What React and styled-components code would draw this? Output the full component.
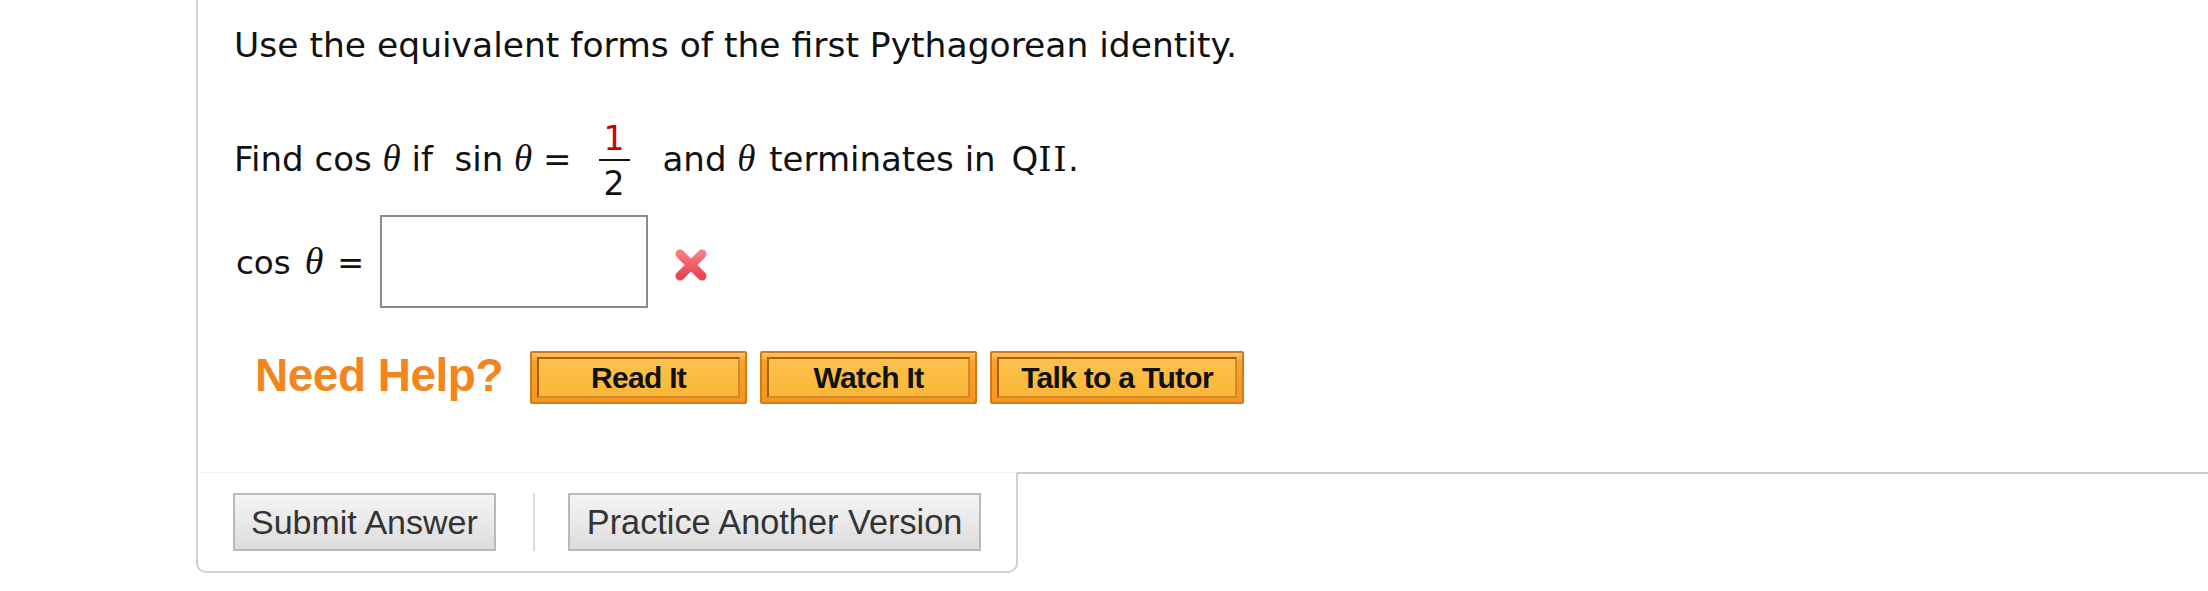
import React from "react";
import styled, { createGlobalStyle } from "styled-components";

const Global = createGlobalStyle`
  html, body { margin: 0; padding: 0; background: #fff; }
  body { font-family: "DejaVu Sans", Verdana, sans-serif; color: #111; }
  * { box-sizing: border-box; }
`;

const Page = styled.div`
  width: 2208px;
  height: 591px;
  overflow: hidden;
  background: #fff;
`;

const Card = styled.div`
  margin-left: 196px;
  display: flex;
  flex-direction: column;
`;

const Body = styled.div`
  height: 472px;
  border-left: 2px solid #d3d3d3;
  padding: 25px 0 0 36px;
`;

const Title = styled.div`
  font-size: 34.5px;
  line-height: 40px;
  white-space: nowrap;
`;

const Question = styled.div`
  margin-top: 58px;
  font-size: 34px;
  line-height: 40px;
  white-space: nowrap;
`;

const Theta = styled.span`
  font-family: "Liberation Serif", "Times New Roman", serif;
  font-style: italic;
  font-size: ${(p) => p.$size || 37}px;
  margin-right: ${(p) => p.$after || 0}px;
`;

const Quadrant = styled.span`
  margin-left: 5px;
`;

const Roman = styled.span`
  font-family: "DejaVu Serif", "Liberation Serif", serif;
  font-size: 34px;
  letter-spacing: 1.5px;
`;

const Fraction = styled.span`
  display: inline-flex;
  flex-direction: column;
  align-items: stretch;
  vertical-align: middle;
  margin: 0 33px 0 27px;
  font-size: 33px;
  line-height: 32px;
  text-align: center;
`;

const Numerator = styled.span`
  color: #d40000;
  padding: 0 5px 4px;
  border-bottom: 2px solid #111;
`;

const Denominator = styled.span`
  padding: 7px 5px 0;
`;

const AnswerRow = styled.div`
  margin-top: 15px;
  display: flex;
  align-items: center;
`;

const MathLabel = styled.div`
  display: flex;
  align-items: baseline;
  gap: 14px;
  font-size: 32.5px;
  line-height: 40px;
  margin-left: 2px;
  margin-right: 16px;
`;

const Equals = styled.span`
  font-size: 32px;
`;

const AnswerInput = styled.input`
  width: 268px;
  height: 93px;
  border: 2px solid #8a8a8a;
  background: #fff;
  outline: none;
  padding: 0 8px;
  font-size: 30px;
`;

const WrongMark = styled.svg`
  margin-left: 25px;
  width: 36px;
  height: 36px;
  margin-top: 6px;
`;

const HelpRow = styled.div`
  margin-top: 43px;
  margin-left: 21px;
  display: flex;
  align-items: center;
  gap: 13px;
`;

const HelpLabel = styled.span`
  font-family: "Liberation Sans", Arial, sans-serif;
  font-weight: bold;
  font-size: 46px;
  line-height: 46px;
  color: #f2861c;
  margin-right: 14px;
  margin-bottom: 6px;
  letter-spacing: -0.5px;
`;

const HelpButton = styled.button`
  width: ${(p) => p.$w}px;
  height: 53px;
  padding: 4px 5px;
  border: 2px solid #d27a18;
  border-radius: 2px;
  background: linear-gradient(#fbc66b 0%, #f7a12c 18%, #f59622 100%);
  cursor: pointer;
  display: flex;
`;

const HelpInner = styled.span`
  flex: 1;
  display: flex;
  align-items: center;
  justify-content: center;
  border: 2px solid #a9600f;
  border-right-color: #d08a2c;
  border-bottom-color: #d08a2c;
  background: linear-gradient(#fcc24e, #fbb636);
  font-family: "Liberation Sans", Arial, sans-serif;
  font-weight: bold;
  font-size: 30px;
  letter-spacing: -0.7px;
  color: #111;
`;

const Footer = styled.div`
  display: flex;
  align-items: flex-start;
`;

const Tab = styled.div`
  display: flex;
  align-items: stretch;
  padding: 20px 35px 20px 35px;
  border: 2px solid #cfcfcf;
  border-top: 1px solid #f1f1f1;
  border-radius: 0 0 10px 10px;
  background: #fff;
`;

const GrayButton = styled.button`
  height: 58px;
  padding: 0 ${(p) => p.$pad || 16}px;
  border: 2px solid #b9b9b9;
  background: linear-gradient(#f5f5f5, #dcdcdc);
  font-family: "Liberation Sans", Arial, sans-serif;
  font-size: ${(p) => p.$size || 34}px;
  color: #333;
  cursor: pointer;
`;

const Divider = styled.span`
  width: 2px;
  background: #dcdcdc;
  margin: 0 33px 0 37px;
`;

const Rule = styled.div`
  flex: 1;
  border-top: 2px solid #cbcbcb;
`;

export default function App() {
  return (
    <Page>
      <Global />
      <Card>
        <Body>
          <Title>Use the equivalent forms of the first Pythagorean identity.</Title>
          <Question>
            Find cos <Theta>θ</Theta> if&nbsp; sin <Theta>θ</Theta> =
            <Fraction>
              <Numerator>1</Numerator>
              <Denominator>2</Denominator>
            </Fraction>
            and <Theta $after={3}>θ</Theta> terminates in
            <Quadrant> Q<Roman>II</Roman>.</Quadrant>
          </Question>
          <AnswerRow>
            <MathLabel>
              <span>cos</span>
              <Theta $size={38}>θ</Theta>
              <Equals>=</Equals>
            </MathLabel>
            <AnswerInput type="text" aria-label="cos theta" />
            <WrongMark viewBox="0 0 36 36" aria-label="incorrect">
              <defs>
                <linearGradient id="xg" x1="0" y1="0" x2="0" y2="1">
                  <stop offset="0" stopColor="#f87a7f" />
                  <stop offset="1" stopColor="#ea4450" />
                </linearGradient>
              </defs>
              <path d="M7 7 L29 29 M29 7 L7 29" stroke="url(#xg)" strokeWidth="9" strokeLinecap="round" fill="none" />
            </WrongMark>
          </AnswerRow>
          <HelpRow>
            <HelpLabel>Need Help?</HelpLabel>
            <HelpButton $w={217}><HelpInner>Read It</HelpInner></HelpButton>
            <HelpButton $w={217}><HelpInner>Watch It</HelpInner></HelpButton>
            <HelpButton $w={254}><HelpInner>Talk to a Tutor</HelpInner></HelpButton>
          </HelpRow>
        </Body>
        <Footer>
          <Tab>
            <GrayButton>Submit Answer</GrayButton>
            <Divider />
            <GrayButton $size={34.3} $pad={17}>Practice Another Version</GrayButton>
          </Tab>
          <Rule />
        </Footer>
      </Card>
    </Page>
  );
}
